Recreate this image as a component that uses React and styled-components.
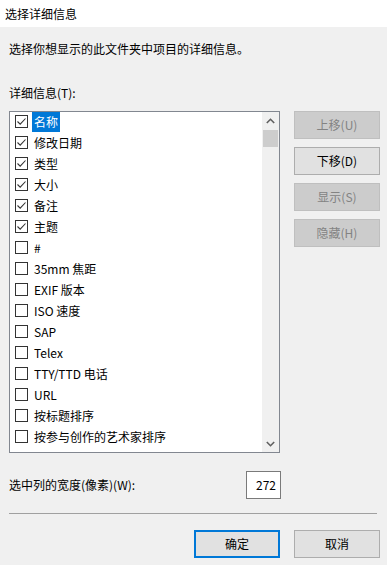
import React from 'react'
import styled, { createGlobalStyle } from 'styled-components'

const GlobalStyle = createGlobalStyle`
body {
    margin: 0;
    font-family: "Noto Sans CJK SC", "Noto Sans", sans-serif;
    font-size: 12px;
}
`

const columns = [
    { name: '名称', checked: true, selected: true },
    { name: '修改日期', checked: true },
    { name: '类型', checked: true },
    { name: '大小', checked: true },
    { name: '备注', checked: true },
    { name: '主题', checked: true },
    { name: '#' },
    { name: '35mm 焦距' },
    { name: 'EXIF 版本' },
    { name: 'ISO 速度' },
    { name: 'SAP' },
    { name: 'Telex' },
    { name: 'TTY/TTD 电话' },
    { name: 'URL' },
    { name: '按标题排序' },
    { name: '按参与创作的艺术家排序' },
]

const sideButtons = [
    { label: '上移(U)', disabled: true },
    { label: '下移(D)' },
    { label: '显示(S)', disabled: true },
    { label: '隐藏(H)', disabled: true },
]

const Dialog = () => {
    return (
        <Window>
            <GlobalStyle />
            <TitleBar>选择详细信息</TitleBar>
            <Content>
                <Desc>选择你想显示的此文件夹中项目的详细信息。</Desc>
                <FieldLabel>详细信息(T):</FieldLabel>
                <MainRow>
                    <ListBox>
                        <Rows>
                            {columns.map((c) => (
                                <Row key={c.name}>
                                    <Check>
                                        {c.checked && (
                                            <svg width="11" height="11" viewBox="0 0 11 11">
                                                <path d="M1.5 5.5 L4.2 8.2 L9.5 2.5" fill="none" stroke="#333" strokeWidth="1.1" />
                                            </svg>
                                        )}
                                    </Check>
                                    <RowText $selected={c.selected}>{c.name}</RowText>
                                </Row>
                            ))}
                        </Rows>
                        <ScrollBar>
                            <ArrowBox>
                                <svg width="9" height="6" viewBox="0 0 9 6">
                                    <path d="M0.8 5 L4.5 1.3 L8.2 5" fill="none" stroke="#606060" strokeWidth="1.6" />
                                </svg>
                            </ArrowBox>
                            <Thumb />
                            <Track />
                            <ArrowBox>
                                <svg width="9" height="6" viewBox="0 0 9 6">
                                    <path d="M0.8 1 L4.5 4.7 L8.2 1" fill="none" stroke="#606060" strokeWidth="1.6" />
                                </svg>
                            </ArrowBox>
                        </ScrollBar>
                    </ListBox>
                    <SideButtons>
                        {sideButtons.map((b) => (
                            <Button key={b.label} $disabled={b.disabled}>{b.label}</Button>
                        ))}
                    </SideButtons>
                </MainRow>
                <WidthRow>
                    <span>选中列的宽度(像素)(W):</span>
                    <WidthInput>272</WidthInput>
                </WidthRow>
                <Separator />
                <Footer>
                    <Button $default>确定</Button>
                    <Button>取消</Button>
                </Footer>
            </Content>
        </Window>
    )
}

const Window = styled.div`
width: 387px;
height: 565px;
background: #f0f0f0;
color: #000;
display: flex;
flex-direction: column;
overflow: hidden;
`

const TitleBar = styled.div`
height: 27px;
background: #ffffff;
display: flex;
align-items: center;
padding-left: 5px;
line-height: 16px;
`

const Content = styled.div`
padding: 0 0 0 9px;
display: flex;
flex-direction: column;
`

const Desc = styled.div`
margin-top: 14px;
line-height: 16px;
`

const FieldLabel = styled.div`
margin-top: 28px;
line-height: 16px;
`

const MainRow = styled.div`
margin-top: 10px;
display: flex;
align-items: flex-start;
`

const ListBox = styled.div`
width: 269px;
height: 340px;
border: 1px solid #828790;
background: #ffffff;
display: flex;
overflow: hidden;
`

const Rows = styled.div`
flex: 1;
margin-top: -1px;
`

const Row = styled.div`
height: 21px;
display: flex;
align-items: center;
padding-left: 5px;
`

const Check = styled.div`
width: 11px;
height: 11px;
border: 1px solid #333333;
display: flex;
align-items: center;
justify-content: center;
margin-right: 4px;
`

const RowText = styled.span`
line-height: 20px;
padding: 0 2px;
white-space: nowrap;
background: ${(p) => (p.$selected ? '#0078d7' : 'transparent')};
color: ${(p) => (p.$selected ? '#ffffff' : '#000000')};
`

const ScrollBar = styled.div`
width: 17px;
background: #f0f0f0;
display: flex;
flex-direction: column;
`

const ArrowBox = styled.div`
height: 17px;
display: flex;
align-items: center;
justify-content: center;
`

const Thumb = styled.div`
height: 17px;
margin: 1px 1px 0;
background: #cdcdcd;
`

const Track = styled.div`
flex: 1;
`

const SideButtons = styled.div`
margin-left: 14px;
display: flex;
flex-direction: column;
gap: 8px;
`

const Button = styled.div`
width: 86px;
height: 28px;
box-sizing: border-box;
display: flex;
align-items: center;
justify-content: center;
line-height: 16px;
background: ${(p) => (p.$disabled ? '#cccccc' : '#e1e1e1')};
border: ${(p) => (p.$default ? '2px solid #0078d7' : p.$disabled ? '1px solid #bfbfbf' : '1px solid #adadad')};
color: ${(p) => (p.$disabled ? '#838383' : '#000000')};
`

const WidthRow = styled.div`
margin-top: 18px;
display: flex;
align-items: center;
justify-content: space-between;
width: 272px;
line-height: 16px;
`

const WidthInput = styled.div`
width: 35px;
height: 28px;
box-sizing: border-box;
border: 1px solid #7a7a7a;
background: #ffffff;
display: flex;
align-items: center;
justify-content: flex-end;
padding-right: 4px;
`

const Separator = styled.div`
margin-top: 14px;
width: 368px;
height: 1px;
background: #a0a0a0;
`

const Footer = styled.div`
margin-top: 16px;
display: flex;
justify-content: flex-end;
gap: 14px;
padding-right: 7px;
`

export default Dialog
